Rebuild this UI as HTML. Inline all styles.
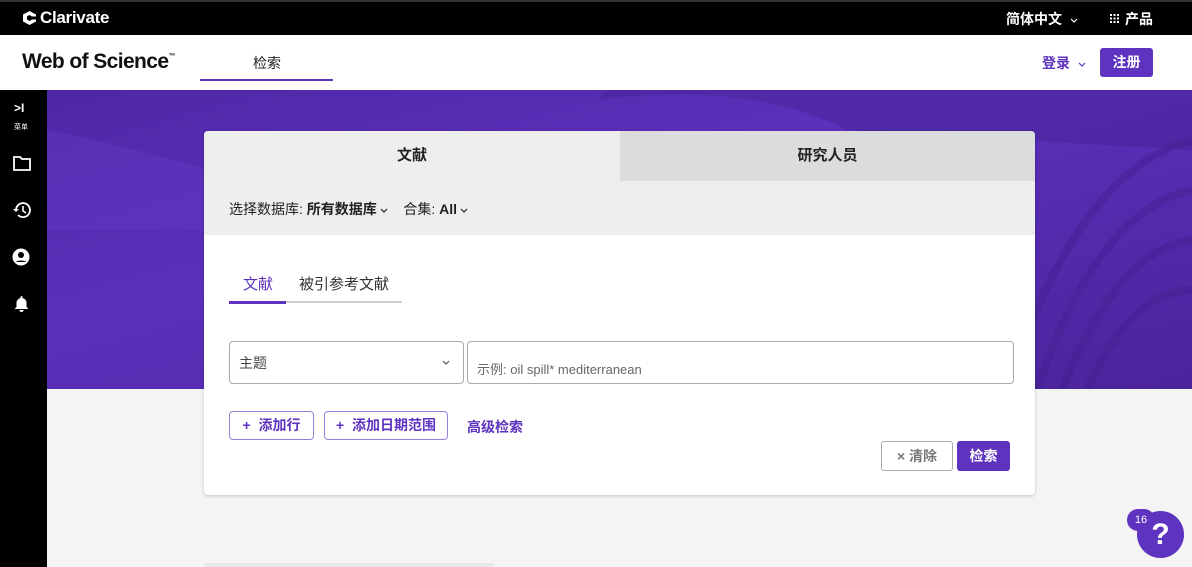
<!DOCTYPE html>
<html><head><meta charset="utf-8"><style>
*{box-sizing:border-box;margin:0;padding:0}
body{width:1192px;height:567px;overflow:hidden;font-family:"Liberation Sans","Noto Sans CJK SC",sans-serif;background:#f4f4f4;position:relative}
.abs{position:absolute}
.chev{display:inline-block;vertical-align:middle;margin-left:3px}
</style></head><body>
<div class="abs" style="left:0;top:0;width:1192px;height:35px;background:#000"></div>
<div class="abs" style="left:0;top:0;width:1192px;height:2px;background:#333"></div>
<svg class="abs" style="left:22px;top:10px" width="15" height="16" viewBox="0 0 15 16"><path d="M7.5 1 L14 4.5 L14 6.5 L10 6.5 L7.5 5 L5 6.5 L5 9.5 L7.5 11 L10 9.5 L14 9.5 L14 11.5 L7.5 15 L1 11.5 L1 4.5Z" fill="#fff"/></svg>
<div class="abs" style="left:40px;top:8px;color:#fff;font-size:17px;font-weight:bold;letter-spacing:-0.3px">Clarivate</div>
<div class="abs" style="left:1006px;top:9px;color:#fff;font-size:14px;font-weight:bold">简体中文<svg class="chev" style="margin-left:8px" width="8" height="5"><path d="M1 1l3 3 3-3" fill="none" stroke="#fff" stroke-width="1.2"/></svg></div>
<svg class="abs" style="left:1110px;top:14px" width="9" height="9"><g fill="#fff"><rect x="0" y="0" width="2" height="2"/><rect x="3.5" y="0" width="2" height="2"/><rect x="7" y="0" width="2" height="2"/><rect x="0" y="3.5" width="2" height="2"/><rect x="3.5" y="3.5" width="2" height="2"/><rect x="7" y="3.5" width="2" height="2"/><rect x="0" y="7" width="2" height="2"/><rect x="3.5" y="7" width="2" height="2"/><rect x="7" y="7" width="2" height="2"/></g></svg>
<div class="abs" style="left:1125px;top:9px;color:#fff;font-size:14px;font-weight:bold">产品</div>

<div class="abs" style="left:0;top:35px;width:1192px;height:55px;background:#fff"></div>
<div class="abs" style="left:22px;top:50px;font-size:21px;font-weight:bold;letter-spacing:-0.6px;color:#111">Web of Science<sup style="font-size:7px;vertical-align:10px">™</sup></div>
<div class="abs" style="left:253px;top:53px;font-size:14px;color:#222">检索</div>
<div class="abs" style="left:200px;top:79px;width:133px;height:2px;background:#5e33bf"></div>
<div class="abs" style="left:1042px;top:53px;font-size:14px;font-weight:bold;color:#5e33bf">登录<svg class="chev" style="margin-left:8px" width="8" height="5"><path d="M1 1l3 3 3-3" fill="none" stroke="#5e33bf" stroke-width="1.2"/></svg></div>
<div class="abs" style="left:1100px;top:48px;width:53px;height:29px;background:#5e33bf;border-radius:3px;color:#fff;font-size:14px;font-weight:bold;text-align:center;line-height:29px">注册</div>

<div class="abs" style="left:0;top:90px;width:47px;height:477px;background:#000"></div>
<div class="abs" style="left:14px;top:101px;color:#fff;font-size:12px;font-weight:bold">&gt;I</div>
<div class="abs" style="left:14px;top:122px;color:#fff;font-size:7px">菜单</div>
<svg class="abs" style="left:13px;top:156px" width="18" height="15" viewBox="0 0 18 15"><path d="M1 1h6l2 2h8v11H1z" fill="none" stroke="#fff" stroke-width="1.8"/></svg>
<svg class="abs" style="left:12px;top:201px" width="19" height="18" viewBox="0 0 19 18"><path d="M4 9a7 7 0 1 1 2 5" fill="none" stroke="#fff" stroke-width="1.8"/><path d="M1 8l3 3 3-3" fill="#fff"/><path d="M11 5v5l3 2" fill="none" stroke="#fff" stroke-width="1.6"/></svg>
<svg class="abs" style="left:12px;top:248px" width="18" height="18" viewBox="0 0 18 18"><circle cx="9" cy="9" r="8.5" fill="#fff"/><circle cx="9" cy="7" r="3" fill="#000"/><path d="M3.5 14a7 4 0 0 1 11 0" fill="#000"/></svg>
<svg class="abs" style="left:14px;top:295px" width="15" height="17" viewBox="0 0 15 17"><path d="M7.5 1a1 1 0 0 1 1 1v1a5 5 0 0 1 4 5v4l2 2H0.5l2-2V8a5 5 0 0 1 4-5V2a1 1 0 0 1 1-1z" fill="#fff"/><path d="M5.5 15h4a2 2 0 0 1-4 0z" fill="#fff"/></svg>

<svg class="abs" style="left:47px;top:90px" width="1145" height="299" viewBox="0 0 1145 299">
<defs><linearGradient id="g" x1="0" y1="0" x2="1" y2="1"><stop offset="0" stop-color="#4e27a6"/><stop offset="0.4" stop-color="#5b30bb"/><stop offset="1" stop-color="#4a249c"/></linearGradient></defs>
<rect width="1145" height="299" fill="url(#g)"/>
<path d="M0 40 Q200 80 300 140 L0 140Z" fill="#6a3fcc" opacity="0.3"/>
<path d="M550 10 Q700 -10 800 40 L1145 60 L1145 0 L560 0Z" fill="#3f1f8a" opacity="0.35"/>
<g fill="none" stroke="#3e1d88" stroke-width="8" opacity="0.35"><path d="M990 300 Q1050 120 1145 100"/><path d="M1015 300 Q1070 160 1145 150"/><path d="M1040 300 Q1085 200 1145 200"/><path d="M960 300 Q1030 80 1145 50"/></g>
</svg>

<div class="abs" style="left:204px;top:131px;width:831px;height:364px;background:#fff;border-radius:4px;box-shadow:0 1px 3px rgba(0,0,0,.2);overflow:hidden">
<div class="abs" style="left:0;top:0;width:416px;height:50px;background:#eeeeee;text-align:center;line-height:50px;font-size:15px;font-weight:bold;color:#222">文献</div>
<div class="abs" style="left:416px;top:0;width:415px;height:50px;background:#dcdcdc;text-align:center;line-height:50px;font-size:15px;font-weight:bold;color:#222">研究人员</div>
<div class="abs" style="left:0;top:50px;width:831px;height:54px;background:#eeeeee"></div>
<div class="abs" style="left:25px;top:68px;font-size:14px;color:#222">选择数据库: <b>所有数据库</b><svg class="chev" width="8" height="5"><path d="M1 1l3 3 3-3" fill="none" stroke="#222" stroke-width="1.2"/></svg>&nbsp;&nbsp;&nbsp; 合集: <b>All</b><svg class="chev" width="8" height="5"><path d="M1 1l3 3 3-3" fill="none" stroke="#222" stroke-width="1.2"/></svg></div>
<div class="abs" style="left:39px;top:142px;font-size:15px;color:#5e33bf">文献</div>
<div class="abs" style="left:95px;top:142px;font-size:15px;color:#333">被引参考文献</div>
<div class="abs" style="left:25px;top:170px;width:173px;height:2px;background:#ccc"></div>
<div class="abs" style="left:25px;top:170px;width:57px;height:3px;background:#5e33bf"></div>
<div class="abs" style="left:25px;top:210px;width:235px;height:43px;border:1px solid #aaa;border-radius:4px"></div>
<div class="abs" style="left:35px;top:222px;font-size:14px;color:#444">主题</div>
<svg class="abs" style="left:238px;top:229px" width="8" height="5"><path d="M1 1l3 3 3-3" fill="none" stroke="#555" stroke-width="1.2"/></svg>
<div class="abs" style="left:263px;top:210px;width:547px;height:43px;border:1px solid #aaa;border-radius:4px"></div>
<div class="abs" style="left:273px;top:228px;font-size:13px;color:#666">示例: oil spill* mediterranean</div>
<div class="abs" style="left:25px;top:280px;width:85px;height:29px;border:1px solid #9a80d8;border-radius:4px;color:#5e33bf;font-size:14px;font-weight:bold;text-align:center;line-height:27px">+&nbsp; 添加行</div>
<div class="abs" style="left:120px;top:280px;width:124px;height:29px;border:1px solid #9a80d8;border-radius:4px;color:#5e33bf;font-size:14px;font-weight:bold;text-align:center;line-height:27px">+&nbsp; 添加日期范围</div>
<div class="abs" style="left:263px;top:286px;font-size:14px;color:#5e33bf;font-weight:bold">高级检索</div>
<div class="abs" style="left:677px;top:310px;width:72px;height:30px;border:1px solid #aaa;border-radius:3px;color:#777;font-size:14px;font-weight:bold;text-align:center;line-height:28px">× 清除</div>
<div class="abs" style="left:753px;top:310px;width:53px;height:30px;background:#5e33bf;border-radius:3px;color:#fff;font-size:14px;font-weight:bold;text-align:center;line-height:30px">检索</div>
</div>

<div class="abs" style="left:204px;top:563px;width:290px;height:4px;background:#e8e8e8"></div>
<div class="abs" style="left:1137px;top:511px;width:47px;height:47px;border-radius:50%;background:#5e33bf;color:#fff;font-size:30px;font-weight:bold;text-align:center;line-height:47px">?</div>
<div class="abs" style="left:1127px;top:509px;width:28px;height:22px;border-radius:11px;background:#5e33bf;color:#fff;font-size:11px;text-align:center;line-height:22px">16</div>
</body></html>
